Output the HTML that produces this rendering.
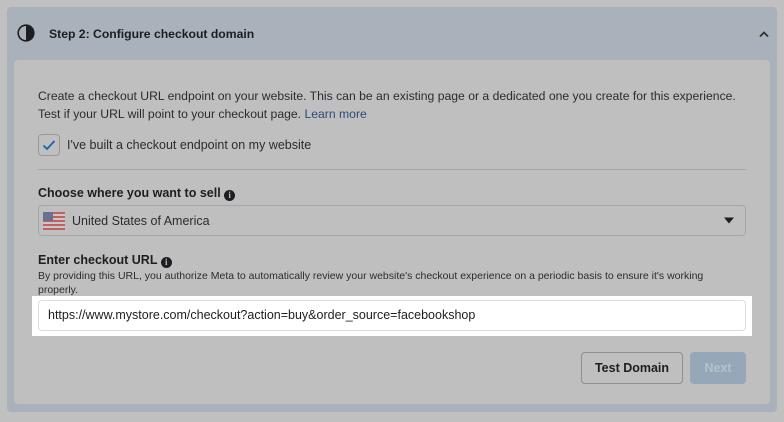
<!DOCTYPE html>
<html><head><meta charset="utf-8"><style>
*{box-sizing:border-box;margin:0;padding:0}
body{width:784px;height:422px;background:#c0c0c0;font-family:"Liberation Sans",sans-serif;color:#1c1e21;position:relative;overflow:hidden}
.outer{position:absolute;left:7px;top:7px;width:770px;height:405px;background:#a9b2ba;border-radius:4px}
.hdr{position:absolute;left:49px;top:27px;font-size:12.2px;font-weight:bold;color:#1c1e21;white-space:nowrap}
.card{position:absolute;left:14px;top:60px;width:756px;height:344px;background:#bfbfbf;border-radius:4px}
.t{position:absolute;font-size:12.5px;color:#2a2c30;white-space:nowrap}
.b{position:absolute;font-size:12.5px;font-weight:bold;color:#1c1e21;white-space:nowrap}
.info{display:inline-block;width:11px;height:11px;border-radius:50%;background:#1c1e21;color:#bfbfbf;font-size:9px;line-height:11px;text-align:center;vertical-align:-1px;font-weight:bold;font-family:"Liberation Serif",serif}
</style></head><body>
<div class="outer"></div>
<svg style="position:absolute;left:17px;top:24px" width="18" height="18" viewBox="0 0 18 18"><circle cx="9" cy="9" r="7.8" fill="none" stroke="#1c1e21" stroke-width="1.6"/><path d="M9 1.2 A7.8 7.8 0 0 1 9 16.8Z" fill="#1c1e21"/></svg>
<div class="hdr">Step 2: Configure checkout domain</div>
<svg style="position:absolute;left:758px;top:30px" width="12" height="8" viewBox="0 0 12 8"><path d="M2 6.5L6 2.5L10 6.5" fill="none" stroke="#333" stroke-width="1.8"/></svg>
<div class="card"></div>
<div class="t" style="left:38px;top:87px;line-height:18px;font-size:12.2px">Create a checkout URL endpoint on your website. This can be an existing page or a dedicated one you create for this experience.<br>Test if your URL will point to your checkout page. <span style="color:#2d4a7a">Learn more</span></div>
<div style="position:absolute;left:38px;top:134px;width:22px;height:22px;border:1px solid #999;border-radius:4px"></div>
<svg style="position:absolute;left:42px;top:139px" width="14" height="12" viewBox="0 0 14 12"><path d="M1.5 6.5L5 10L12.5 2" fill="none" stroke="#1d5fb0" stroke-width="1.8"/></svg>
<div class="t" style="left:67px;top:138px">I've built a checkout endpoint on my website</div>
<div style="position:absolute;left:38px;top:169px;width:708px;height:1px;background:#a8a8a8"></div>
<div class="b" style="left:38px;top:186px">Choose where you want to sell <span class="info">i</span></div>
<div style="position:absolute;left:38px;top:205px;width:708px;height:31px;border:1px solid #a6a6a6;border-radius:4px"></div>
<svg style="position:absolute;left:43px;top:212px" width="22" height="18" viewBox="0 0 22 18"><rect width="22" height="18" fill="#c8c8c8"/><g fill="#c06060"><rect y="0" width="22" height="2"/><rect y="4" width="22" height="2"/><rect y="8" width="22" height="2"/><rect y="12" width="22" height="2"/><rect y="16" width="22" height="2"/></g><rect width="10" height="9" fill="#6a7090"/></svg>
<div class="t" style="left:72px;top:214px">United States of America</div>
<svg style="position:absolute;left:723px;top:217px" width="12" height="7" viewBox="0 0 12 7"><path d="M1 0.5H11L6 6.5Z" fill="#1c1e21"/></svg>
<div class="b" style="left:38px;top:253px">Enter checkout URL <span class="info">i</span></div>
<div class="t" style="left:38px;top:269px;font-size:10.5px;line-height:14px;white-space:normal;width:700px">By providing this URL, you authorize Meta to automatically review your website's checkout experience on a periodic basis to ensure it's working properly.</div>
<div style="position:absolute;left:32px;top:296px;width:720px;height:40px;background:#fff"></div>
<div style="position:absolute;left:38px;top:300px;width:708px;height:31px;border:1px solid #dcdcdc;border-radius:4px;background:#fff"></div>
<div class="t" style="left:48px;top:308px;color:#1c1e21">https://www.mystore.com/checkout?action=buy&amp;order_source=facebookshop</div>
<div style="position:absolute;left:581px;top:352px;width:102px;height:32px;border:1px solid #8e8e8e;border-radius:4px;font-size:12.5px;font-weight:bold;text-align:center;line-height:30px">Test Domain</div>
<div style="position:absolute;left:690px;top:352px;width:56px;height:32px;background:#97a7ba;border-radius:4px;font-size:12.5px;font-weight:bold;text-align:center;line-height:32px;color:#b4c0cc">Next</div>
</body></html>
